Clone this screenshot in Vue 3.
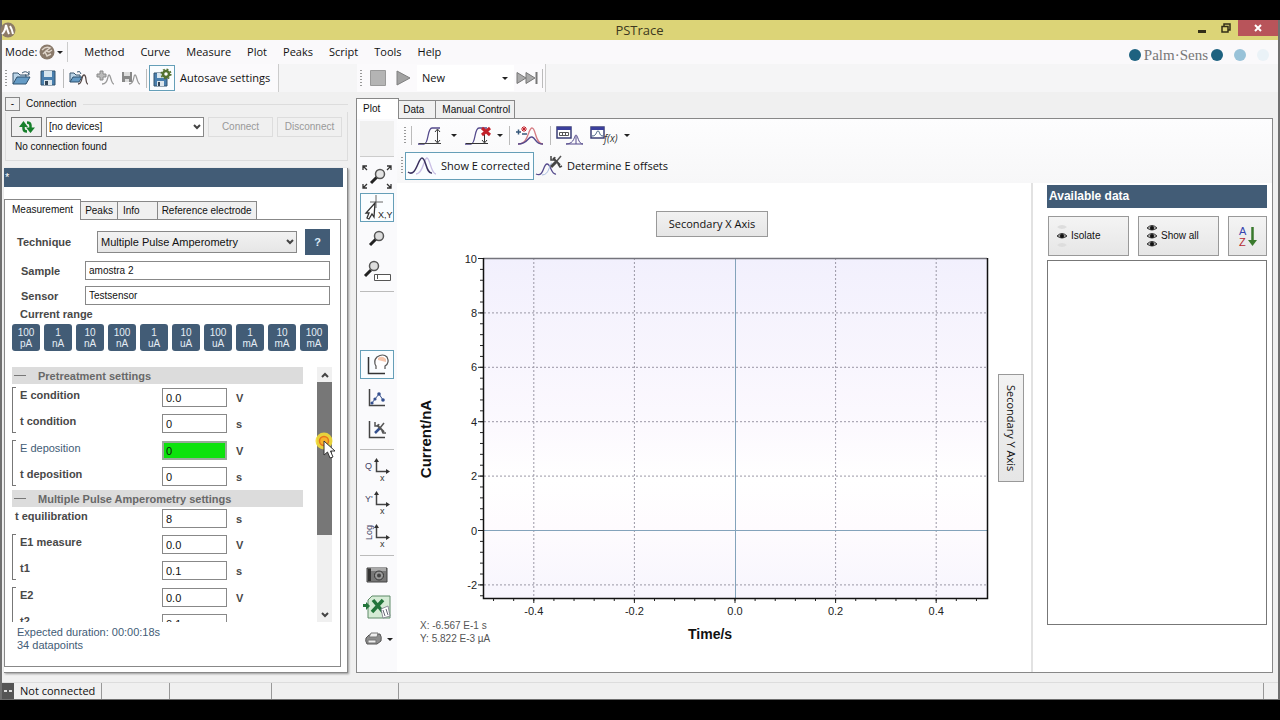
<script setup>
import { ref } from 'vue'

const menus = ['Method', 'Curve', 'Measure', 'Plot', 'Peaks', 'Script', 'Tools', 'Help']
const tabs = ['Measurement', 'Peaks', 'Info', 'Reference electrode']
const plotTabs = ['Plot', 'Data', 'Manual Control']
const ranges = ['100 pA', '1 nA', '10 nA', '100 nA', '1 uA', '10 uA', '100 uA', '1 mA', '10 mA', '100 mA'].map(r => r.split(' '))
const pretreatment = ref([
  [{ id: 'econd', label: 'E condition', value: '0.0', unit: 'V' }, { id: 'tcond', label: 't condition', value: '0', unit: 's' }],
  [{ id: 'edep', label: 'E deposition', value: '0', unit: 'V', active: true }, { id: 'tdep', label: 't deposition', value: '0', unit: 's' }]
])
const pulses = ref([
  [{ id: 'e1', label: 'E1 measure', value: '0.0', unit: 'V' }, { id: 't1', label: 't1', value: '0.1', unit: 's' }],
  [{ id: 'e2', label: 'E2', value: '0.0', unit: 'V' }, { id: 't2', label: 't2', value: '0.1', unit: 's' }]
])
const equilibration = ref('8')
const sample = ref('amostra 2')
const sensor = ref('Testsensor')

const px = v => 335 + v * 503
const py = v => 290.5 - v * 27.2
const xMajor = [-0.4, -0.2, 0, 0.2, 0.4]
const yMajor = [10, 8, 6, 4, 2, 0, -2]
const xMinor = Array.from({ length: 25 }, (_, i) => (i - 12) * 0.04)
const yMinor = Array.from({ length: 32 }, (_, i) => 10 - i * 0.4).filter(v => v > -2.5)
</script>

<template>
  <div class="screen">
    <div class="window">
      <header class="titlebar">
        <svg class="app-icon" width="16" height="16" viewBox="0 0 16 16"><circle cx="6" cy="8" r="7.5" fill="#8d7b66" /><path d="M0 12Q3 10 4 3Q6 10 7 12M8 4Q10 7 11 12" fill="none" stroke="#fff" stroke-width="2" /></svg>
        <h1>PSTrace</h1>
        <div class="winbtns">
          <button aria-label="Minimize"><svg width="8" height="12" viewBox="0 0 8 12"><path d="M0 9.500H8" stroke="#332e18" stroke-width="3" /></svg></button>
          <button aria-label="Restore"><svg width="10" height="10" viewBox="0 0 10 10"><path d="M3 3V1H9V7H7M1 3.500H7V9H1Z" fill="none" stroke="#332e18" stroke-width="1.500" /></svg></button>
          <button class="close" aria-label="Close"><svg width="8" height="8" viewBox="0 0 8 8"><path d="M1 1L7 7M7 1L1 7" stroke="#fff" stroke-width="2" /></svg></button>
        </div>
      </header>

      <nav class="menubar">
        <button class="mode">Mode:
          <svg width="16" height="16" viewBox="0 0 16 16"><circle cx="8" cy="8" r="7.500" fill="#8a7a6b" /><path d="M3 6Q7 2 11 4L7 7L10 8L13 6M4 10L6 8L8 12L12 10" fill="none" stroke="#ded4c9" stroke-width="1.500" /></svg>
          <i class="caret"></i>
        </button>
        <button v-for="m in menus" :key="m">{{ m }}</button>
        <div class="brand">
          <i class="dot"></i><span>Palm·Sens</span><i class="dot"></i><i class="dot mid"></i><i class="dot pale"></i>
        </div>
      </nav>

      <div class="toolbars">
        <div class="tools file-tools">
          <i class="grip"></i>
          <button aria-label="Open"><svg width="20" height="16" viewBox="0 0 20 16"><path d="M1 14V3H6L8 5H14V7" fill="#bcd5e8" stroke="#38566f" /><path d="M1 14L5 7H18L14 14Z" fill="#659bc5" stroke="#2f516e" /><path d="M10 3Q14 0 17 4M17 1V5H13" fill="none" stroke="#38566f" /></svg></button>
          <button aria-label="Save"><svg width="16" height="16" viewBox="0 0 16 16"><path d="M1 1H15V15H1Z" fill="#497fae" stroke="#33526d" /><path d="M4 1H12V7H4Z" fill="#d7e6ef" /><path d="M4 10H12V15H4Z" fill="#dce6ec" /><path d="M5 11H8V15H5Z" fill="#345" /></svg></button>
          <i class="rule"></i>
          <button aria-label="Open curve"><svg width="20" height="16" viewBox="0 0 20 16"><path d="M1 12V3H5L7 5H11V7" fill="#bcd5e8" stroke="#38566f" /><path d="M1 12L4 7H13L10 12Z" fill="#659bc5" stroke="#2f516e" /><path d="M8 2Q11 0 12 4" fill="none" stroke="#38566f" /><path d="M9 14C14 14 12 5 15 5S16 14 19 14" fill="none" stroke="#574a48" stroke-width="1.300" /></svg></button>
          <button aria-label="Add curve"><svg width="20" height="16" viewBox="0 0 20 16"><path d="M5 1H8V4H11V7H8V10H5V7H2V4H5Z" fill="#bbb" stroke="#8a8a8a" /><path d="M7 14C14 14 12 5 14 5S16 14 19 14" fill="none" stroke="#999" stroke-width="1.300" /></svg></button>
          <button aria-label="Save curve"><svg width="20" height="16" viewBox="0 0 20 16"><path d="M1 2H11V12H1Z" fill="#888" /><path d="M3 2H9V6H3ZM4 9H8V12H4Z" fill="#ddd" /><path d="M8 14C14 14 12 5 14 5S16 14 19 14" fill="none" stroke="#999" stroke-width="1.300" /></svg></button>
          <i class="rule"></i>
          <button class="picked" aria-label="Toggle autosave"><svg width="20" height="20" viewBox="0 0 20 20"><path d="M2 5H15V18H2Z" fill="#497fae" stroke="#33526d" /><path d="M5 5H12V10H5Z" fill="#d7e6ef" /><path d="M5 13H12V18H5Z" fill="#dce6ec" /><path d="M6 14H8V18H6Z" fill="#345" /><circle cx="14" cy="6" r="3" fill="#fff" stroke="#53712e" stroke-width="2.500" /><circle cx="14" cy="6" r="4.800" fill="none" stroke="#53712e" stroke-width="1.500" stroke-dasharray="1.900 1.870" /></svg></button>
          <button class="wordy">Autosave settings</button>
        </div>
        <div class="tools run-tools">
          <i class="grip"></i>
          <button aria-label="Stop"><svg width="16" height="16" viewBox="0 0 16 16"><path d="M.5.5H15.500V15.500H.5Z" fill="#b4b4b4" stroke="#999" /></svg></button>
          <button aria-label="Run"><svg width="16" height="16" viewBox="0 0 16 16"><path d="M1 1L14 8L1 15Z" fill="#a2a2a2" stroke="#808080" /></svg></button>
          <button class="new-item">New<i class="caret"></i></button>
          <button aria-label="Skip"><svg width="22" height="14" viewBox="0 0 22 14"><path d="M1 1.500L10 7L1 12.500ZM10 1.500L19 7L10 12.500Z" fill="#aaa" stroke="#777" /><path d="M20.500 1V13" stroke="#777" stroke-width="2" /></svg></button>
          <i class="rule"></i>
        </div>
      </div>

      <main class="body">
        <aside class="left">
          <section class="connection">
            <div class="legend"><button aria-label="Collapse connection">-</button><span>Connection</span><i></i></div>
            <div class="conn-box">
              <div class="conn-row">
                <button class="refresh" aria-label="Refresh devices"><svg width="16" height="14" viewBox="0 0 16 14"><path d="M4.500 6V8.500Q4.500 11.500 8 11.500M11.500 8V5.500Q11.500 2.500 8 2.500" fill="none" stroke="#17802b" stroke-width="2.500" /><path d="M0 7L4.500 1L9 7ZM7 7.500H16L11.500 13Z" fill="#17802b" /></svg></button>
                <div class="drop devices"><select aria-label="Device"><option>[no devices]</option></select><svg width="8" height="6" viewBox="0 0 8 6"><path d="M1 1L4 4L7 1" /></svg></div>
                <button class="conn-btn" disabled>Connect</button>
                <button class="conn-btn" disabled>Disconnect</button>
              </div>
              <p>No connection found</p>
            </div>
          </section>

          <section class="method">
            <div class="banner">*</div>
            <div class="tabs" role="tablist">
              <button v-for="(t, i) in tabs" :key="t" role="tab" :class="{ on: i === 0, wide: t === 'Info' }">{{ t }}</button>
            </div>
            <div class="page">
              <div class="technique">
                <label for="tech">Technique</label>
                <div class="drop"><select id="tech"><option>Multiple Pulse Amperometry</option></select><svg width="8" height="6" viewBox="0 0 8 6"><path d="M1 1L4 4L7 1" /></svg></div>
                <button class="help">?</button>
              </div>
              <div class="field"><label for="sample">Sample</label><input id="sample" v-model="sample"></div>
              <div class="field"><label for="sensor">Sensor</label><input id="sensor" v-model="sensor"></div>
              <h2>Current range</h2>
              <div class="ranges">
                <button v-for="r in ranges" :key="r.join()"><span>{{ r[0] }}</span><span>{{ r[1] }}</span></button>
              </div>
              <div class="scroller">
                <div class="settings">
                  <h3><button aria-label="Collapse"></button>Pretreatment settings</h3>
                  <div v-for="(g, i) in pretreatment" :key="i" class="group">
                    <div v-for="f in g" :key="f.id" class="row" :class="{ active: f.active }">
                      <label :for="f.id">{{ f.label }}</label><input :id="f.id" v-model="f.value"><span>{{ f.unit }}</span>
                    </div>
                  </div>
                  <h3><button aria-label="Collapse"></button>Multiple Pulse Amperometry settings</h3>
                  <div class="row single"><label for="eq">t equilibration</label><input id="eq" v-model="equilibration"><span>s</span></div>
                  <div v-for="(g, i) in pulses" :key="i" class="group">
                    <div v-for="f in g" :key="f.id" class="row">
                      <label :for="f.id">{{ f.label }}</label><input :id="f.id" v-model="f.value"><span>{{ f.unit }}</span>
                    </div>
                  </div>
                </div>
                <div class="scrollbar">
                  <button aria-label="Scroll up"><svg width="8" height="6" viewBox="0 0 8 6"><path d="M1 5L4 2L7 5" /></svg></button>
                  <div class="track"><div class="thumb"></div></div>
                  <button aria-label="Scroll down"><svg width="8" height="6" viewBox="0 0 8 6"><path d="M1 1L4 4L7 1" /></svg></button>
                  <svg class="pointer" width="22" height="30" viewBox="0 0 22 30"><circle cx="9" cy="9" r="8.500" fill="#f3dc35" opacity=".9" /><circle cx="9" cy="9" r="4.500" fill="#f7b32c" stroke="#e8741c" stroke-width="1.500" /><path d="M9 9V23L12.500 20L15 26L18 25L15.500 19H20Z" fill="#fff" stroke="#333" /></svg>
                </div>
              </div>
              <p class="summary">Expected duration: 00:00:18s<br>34 datapoints</p>
            </div>
          </section>
        </aside>

        <section class="right">
          <div class="tabs plot-tabs" role="tablist">
            <button v-for="(t, i) in plotTabs" :key="t" role="tab" :class="{ on: i === 0, data: i === 1 }">{{ t }}</button>
          </div>
          <div class="workspace">
            <div class="rail">
              <div class="rail-top"></div>
              <button aria-label="Zoom to fit"><svg width="30" height="24" viewBox="0 0 30 24"><path d="M1 5V1H5M1 1L5 5M25 1H29V5M29 1L25 5M1 19V23H5M1 23L5 19M25 23H29V19M29 23L25 19" fill="none" stroke="#333" stroke-width="1.300" /><path d="M9 18L15 12" stroke="#222" stroke-width="3" /><circle cx="18" cy="9" r="4.500" fill="#e4e4e4" stroke="#555" stroke-width="1.500" /></svg></button>
              <button class="picked" aria-label="Coordinates"><svg width="30" height="26" viewBox="0 0 30 26"><path d="M14 0V13M8 7H21" stroke="#666" /><path d="M13 8L4 18H7L5 23L7 24L10 19L12 22Z" fill="#fff" stroke="#333" stroke-width="1.300" /><text x="16" y="23" font-size="9" fill="#222">X,Y</text></svg></button>
              <button aria-label="Zoom"><svg width="18" height="18" viewBox="0 0 18 18"><path d="M2 16L8 10" stroke="#222" stroke-width="3" /><circle cx="11" cy="7" r="4.500" fill="#ddd" stroke="#555" stroke-width="1.500" /></svg></button>
              <button class="tall" aria-label="Zoom to value"><svg width="28" height="22" viewBox="0 0 28 22"><path d="M2 16L8 10" stroke="#222" stroke-width="3" /><circle cx="11" cy="6" r="4.500" fill="#ddd" stroke="#555" stroke-width="1.500" /><path d="M11.500 14.500H27.500V20.500H11.500ZM14.500 15V19" fill="#fff" stroke="#555" /></svg></button>
              <i class="hr"></i>
              <div class="spacer"></div>
              <button class="picked preview" aria-label="Peak preview"><svg width="26" height="24" viewBox="0 0 26 24"><path d="M4.500 4V20.500H21" fill="none" stroke="#333" stroke-width="1.500" /><path d="M12 16V13Q9 8 13 4Q19 0 23 4Q26 10 21 13V16" fill="#fff" stroke="#555" stroke-width="1.200" /><path d="M14 5Q18 2 22 6V9L18 8L14 7Z" fill="#f5c5ac" /></svg></button>
              <button aria-label="Curve points"><svg width="18" height="18" viewBox="0 0 18 18"><path d="M1.500 0V16.500H17" fill="none" stroke="#444" stroke-width="1.500" /><path d="M4 14L7 10L11 5L15 11" fill="none" stroke="#35508e" /><circle cx="4" cy="14" r="1.600" fill="#35508e" /><circle cx="7" cy="10" r="1.600" fill="#35508e" /><circle cx="11" cy="5" r="1.800" fill="#35508e" /><circle cx="15" cy="11" r="1.800" fill="#35508e" /></svg></button>
              <button aria-label="Plot settings"><svg width="20" height="18" viewBox="0 0 20 18"><path d="M2.500 0V16.500H18" fill="none" stroke="#444" stroke-width="1.500" /><path d="M8 12L13 7" stroke="#35508e" stroke-width="2.500" /><path d="M13 7L17 2" stroke="#555" stroke-width="1.500" /><path d="M10 4L17 11" stroke="#555" stroke-width="2" /><path d="M8 1V5H11L12 3M19 12L16 12L15 10" fill="none" stroke="#555" stroke-width="1.500" /></svg></button>
              <i class="hr"></i>
              <button v-for="a in ['Q', 'Y\'', 'Log']" :key="a" class="axis" :aria-label="a + ' axis'"><svg width="26" height="26" viewBox="0 0 26 26"><path d="M12.500 4V14.500H24" fill="none" stroke="#444" stroke-width="1.500" /><path d="M10 5L12.500 1L15 5ZM22 12L26 14.500L22 17Z" fill="#333" /><text v-if="a !== 'Log'" x="1" y="12" font-size="9" fill="#446">{{ a }}</text><text v-else x="0" y="0" font-size="9" fill="#446" transform="translate(8 17) rotate(-90)">Log</text><text x="16" y="24" font-size="9" fill="#333">x</text></svg></button>
              <i class="hr"></i>
              <button aria-label="Snapshot"><svg width="22" height="18" viewBox="0 0 22 18"><path d="M1 2H21V16H1Z" fill="#777" stroke="#444" /><path d="M2 3H5V15H2Z" fill="#333" /><path d="M5 2H20V5H5Z" fill="#aaa" /><circle cx="13" cy="9.500" r="4.500" fill="#999" stroke="#333" /><circle cx="13" cy="9.500" r="2" fill="#444" /></svg></button>
              <button aria-label="Export to Excel"><svg width="28" height="24" viewBox="0 0 28 24"><path d="M9 1H27V23H5V5Z" fill="#d5ebd5" stroke="#5f8a68" /><path d="M10 5L20 17M20 5L9 17" stroke="#23753b" stroke-width="3.500" /><path d="M18 14L25 11L27 21L20 23Z" fill="#fff" stroke="#778" stroke-width=".8" /><path d="M20 15L22 21M23 14L25 20" stroke="#667" /><path d="M0 9H3V7L7 11L3 15V12H0Z" fill="#23753b" /></svg></button>
              <button aria-label="Print" class="print"><svg width="18" height="14" viewBox="0 0 18 14"><path d="M1 6L4 3L15 2Q17 5 16 9L12 12L2 12Q0 9 1 6Z" fill="#8c8c8c" stroke="#555" /><path d="M6 1H13L12 5H4ZM3 8H11V11H3Z" fill="#eee" stroke="#777" /></svg><i class="caret"></i></button>
            </div>

            <div class="desk">
              <div class="plot-tools">
                <div class="tools">
                  <i class="grip"></i><i class="rule"></i>
                  <button aria-label="Detect step"><svg width="24" height="20" viewBox="0 0 24 20"><path d="M0 18H6C11 18 9 2 14 2H22" fill="none" stroke="#544a8c" stroke-width="1.300" /><path d="M1 17.500H23M19.500 4V16" stroke="#444" /><path d="M17 6L19.500 3L22 6M17 14L19.500 17L22 14" fill="none" stroke="#333" /></svg><i class="caret"></i></button>
                  <button class="remove" aria-label="Remove step"><svg width="26" height="20" viewBox="0 0 26 20"><path d="M0 18H6C11 18 9 2 14 2H22" fill="none" stroke="#544a8c" stroke-width="1.300" /><path d="M1 17.500H23M19.500 8V16M17 14L19.500 17L22 14" fill="none" stroke="#333" /><path d="M17 2L25 9M25 2L17 9" stroke="#c3212a" stroke-width="3" /></svg><i class="caret"></i></button>
                  <i class="rule"></i>
                  <button class="curve-tool" aria-label="Adjust peaks"><svg width="30" height="20" viewBox="0 0 30 20"><path d="M3 18C14 18 13 2 17 2S20 18 28 18" fill="none" stroke="#d57c83" stroke-width="1.300" /><path d="M3 18C13 18 13 10 17 11S20 18 28 18" fill="none" stroke="#544a8c" stroke-width="1.500" /><path d="M1 6H6M3.500 3.500V8.500M7 8H12" stroke="#37577a" stroke-width="1.500" /><path d="M9 0V6M6 3H12M7 1L11 5M11 1L7 5" stroke="#c3212a" /></svg></button>
                  <i class="rule"></i>
                  <button class="curve-tool" aria-label="Peak table"><svg width="28" height="20" viewBox="0 0 28 20"><path d="M1 1H15V12H1Z" fill="#fff" stroke="#3b3f76" stroke-width="1.500" /><path d="M1 2.500H15" stroke="#3b3f9c" stroke-width="3" /><path d="M3.500 6.500H12.500V9.500H3.500ZM6.500 6V10M9.500 6V10" fill="none" stroke="#555" /><path d="M10 18C19 18 18 9 20 9S22 18 27 18M10 18H27M20 10V18" fill="none" stroke="#544a8c" /></svg></button>
                  <button class="curve-tool" aria-label="Curve function"><svg width="28" height="20" viewBox="0 0 28 20"><path d="M1 1H14V12H1Z" fill="#fff" stroke="#3b3f76" stroke-width="1.500" /><path d="M1 2.500H14" stroke="#3b3f9c" stroke-width="3" /><path d="M2 10C7 10 6 5 8 5S9 10 13 10" fill="none" stroke="#37577a" /><text x="14" y="16" font-size="10" font-style="italic" fill="#333">f(x)</text></svg><i class="caret"></i></button>
                </div>
                <div class="tools second">
                  <i class="grip"></i>
                  <button class="picked labelled"><svg width="30" height="20" viewBox="0 0 30 20"><path d="M9 18C16 18 17 2 20 2S24 18 29 18" fill="none" stroke="#c9bfe5" stroke-width="1.300" /><path d="M1 16C9 22 11 2 15 2S19 18 25 17" fill="none" stroke="#3a315f" stroke-width="1.500" /></svg>Show E corrected</button>
                  <button class="labelled"><svg width="28" height="22" viewBox="0 0 28 22"><path d="M1 19C9 23 8 9 12 9S16 20 21 19" fill="none" stroke="#544a8c" stroke-width="1.300" /><path d="M7 20C15 20 14 8 17 8" fill="none" stroke="#a9bce0" /><path d="M16 12L21 7" stroke="#444" stroke-width="3" /><path d="M21 7L26 1" stroke="#555" stroke-width="1.500" /><path d="M18 3L25 10" stroke="#444" stroke-width="2" /><path d="M16 1V5H19L20 2M27 11L25 12L23 9" fill="none" stroke="#444" stroke-width="1.500" /></svg>Determine E offsets</button>
                </div>
              </div>

              <div class="content">
                <div class="chart">
                  <button class="axis-btn">Secondary X Axis</button>
                  <div class="plot-row">
                    <svg class="plot" viewBox="0 0 592 376">
                      <defs><linearGradient id="wash" x1="0" y1="0" x2="0" y2="1"><stop offset="0" stop-color="#f2f0fd" /><stop offset=".5" stop-color="#fcf9fe" /><stop offset=".65" stop-color="#fff" /><stop offset=".8" stop-color="#fefbfe" /><stop offset="1" stop-color="#f7f5fd" /></linearGradient></defs>
                      <rect x="83" y="18" width="504" height="340" fill="url(#wash)" />
                      <g class="dots">
                        <line v-for="v in xMajor.filter(n => n)" :key="'x' + v" :x1="px(v)" :x2="px(v)" y1="18" y2="358" />
                        <line v-for="v in yMajor.filter(n => n && n < 10)" :key="'y' + v" :y1="py(v)" :y2="py(v)" x1="84" x2="587" />
                      </g>
                      <path d="M335.500 18V358M84 290.500H587" stroke="#84a3bb" />
                      <g stroke="#222">
                        <line v-for="v in xMinor" :key="v" :x1="px(v)" :x2="px(v)" y1="358" y2="361" />
                        <line v-for="v in xMajor" :key="v" :x1="px(v)" :x2="px(v)" y1="358" y2="363" />
                        <line v-for="v in yMinor" :key="v" :y1="py(v)" :y2="py(v)" x1="80" x2="83" />
                        <line v-for="v in yMajor" :key="v" :y1="py(v)" :y2="py(v)" x1="78" x2="83" />
                      </g>
                      <path d="M83 18.500H587" stroke="#74747c" stroke-width="1.500" />
                      <path d="M83.500 18V358.500H587.500V18" fill="none" stroke="#111" stroke-width="1.500" />
                      <g font-size="11" fill="#222">
                        <text v-for="v in xMajor" :key="v" :x="px(v)" y="375" text-anchor="middle">{{ v.toFixed(1) }}</text>
                        <text v-for="v in yMajor" :key="v" :y="py(v) + 4" x="77" text-anchor="end">{{ v }}</text>
                      </g>
                      <text class="ytitle" transform="translate(31 199) rotate(-90)" text-anchor="middle">Current/nA</text>
                    </svg>
                    <button class="axis-btn upright">Secondary Y Axis</button>
                  </div>
                  <div class="readout"><p>X: -6.567 E-1 s<br>Y: 5.822 E-3 µA</p><strong>Time/s</strong></div>
                </div>
                <aside class="data-pane">
                  <h2>Available data</h2>
                  <div class="data-btns">
                    <button><svg width="10" height="24" viewBox="0 0 10 24"><path d="M0 3Q5-1 10 3Q5 7 0 3M0 21Q5 17 10 21Q5 25 0 21" fill="#ddd" /><path d="M0 12Q5 7 10 12Q5 16 0 12" fill="#999" stroke="#333" /><circle cx="5" cy="12" r="2" fill="#111" /></svg>Isolate</button>
                    <button><svg width="10" height="24" viewBox="0 0 10 24"><g v-for="y in [0, 8, 16]" :key="y" :transform="`translate(0 ${y})`"><path d="M0 4Q5-1 10 4Q5 8 0 4" fill="#aaa" stroke="#333" /><circle cx="5" cy="4" r="2" fill="#111" /></g></svg>Show all</button>
                    <button class="sort" aria-label="Sort A to Z"><svg width="18" height="22" viewBox="0 0 18 22"><text x="0" y="10" font-size="11" fill="#3744ae">A</text><text x="0" y="21" font-size="11" fill="#b62932">Z</text><path d="M13.500 2V17" stroke="#39792c" stroke-width="2.500" /><path d="M9 15H18L13.500 21Z" fill="#39792c" /></svg></button>
                  </div>
                  <div class="list"></div>
                </aside>
              </div>
            </div>
          </div>
        </section>
      </main>

      <footer class="status">
        <i class="plug"></i><span>Not connected</span><span></span><span></span><span></span><span class="last"></span>
      </footer>
    </div>
  </div>
</template>

<style>
html, body { margin: 0; background: #000; }
</style>

<style scoped>
* { box-sizing: border-box; }
p, h1, h2, h3 { margin: 0; font-weight: normal; }
svg { display: block; flex: none; overflow: visible; }
button, input, select { margin: 0; padding: 0; border: 0; border-radius: 0; background: none; font: inherit; color: inherit; }
button { display: flex; align-items: center; justify-content: center; white-space: nowrap; }
.screen { min-height: 100vh; display: flex; flex-direction: column; padding: 20px 0; background: #000; font: 10px/14px "Liberation Sans", Arial, sans-serif; color: #111; }
.window { flex: 1; display: flex; flex-direction: column; background: #f0f0f0; border: solid #707070; border-width: 0 2px 1px; }
.titlebar { height: 20px; display: flex; align-items: center; background: #dcd477; font: 12px/18px "Open Sans", sans-serif; color: #3d3920; }
.app-icon { width: 16px; margin-right: 71px; }
.titlebar h1 { flex: 1; text-align: center; font-size: 13px; }
.winbtns { display: flex; align-self: flex-start; }
.winbtns button { width: 24px; height: 16px; }
.winbtns .close { width: 40px; background: #b8545a; }
.menubar { height: 24px; display: flex; align-items: center; gap: 16px; padding-left: 3px; background: #faf9fb; font: 11px/16px "Open Sans", sans-serif; color: #111; }
.mode { gap: 2px; padding-right: 4px; height: 20px; border-right: 1px solid #ccc; }
.caret { border: 3px solid transparent; border-top-color: #222; border-bottom: 0; }
.brand { display: flex; align-items: center; gap: 3px; margin-left: auto; padding: 6px 9px 0 0; font: 15px/16px "Liberation Serif", serif; color: #777; }
.dot { width: 12px; height: 12px; border-radius: 50%; background: #1d6280; }
.mid { margin-left: 8px; background: #98c2d8; }
.pale { margin-left: 8px; background: #eaf2f7; }
.toolbars { height: 28px; display: flex; gap: 78px; background: #f5f5f6; font: 11px/16px "Open Sans", sans-serif; color: #111; }
.tools { display: flex; align-items: center; }
.file-tools, .run-tools { background: #fbfafc; border-right: 1px solid #ccc; }
.file-tools { width: 277px; }
.file-tools > button, .run-tools > button { width: 26px; height: 26px; flex: none; }
.file-tools .grip { margin-right: 2px; }
.file-tools > .wordy { width: auto; padding-left: 5px; }
.run-tools { width: 189px; }
.run-tools .new-item { width: 97px; padding: 0 6px 0 5px; justify-content: space-between; background: #fff; }
.grip { width: 2px; height: 17px; margin: 0 3px; background: repeating-linear-gradient(#999 0 1px, transparent 1px 3px); flex: none; }
.rule { width: 1px; height: 19px; margin: 0 2px; background: #bbb; flex: none; }
.picked { border: 1px solid #659fb8; background: #fafdff; }
.body { flex: 1; min-height: 0; display: flex; gap: 8px; padding: 4px 5px 9px 2px; }
.left { width: 344px; flex: none; display: flex; flex-direction: column; gap: 7px; }
.connection { margin-left: 1px; }
.legend { display: flex; align-items: center; gap: 6px; height: 16px; }
.legend button { width: 15px; height: 14px; border: 1px solid #888; }
.legend i { flex: 1; height: 1px; background: #ddd; }
.conn-box { padding: 5px; border: 1px solid #ddd; border-top: 0; height: 49px; }
.conn-row { display: flex; gap: 4px; height: 20px; align-items: stretch; }
.refresh { width: 31px; border: 1px solid #777; }
.drop { position: relative; display: flex; }
.drop select { appearance: none; width: 100%; padding-left: 3px; border: 1px solid #888; background: linear-gradient(#f2f2f2, #e6e6e6); }
.drop svg { position: absolute; right: 3px; top: 50%; margin-top: -3px; pointer-events: none; }
.drop path, .scrollbar button path { fill: none; stroke: #444; stroke-width: 2; }
.devices { flex: 1; }
.devices select { padding-left: 2px; background: #fff; }
.conn-btn { width: 65px; border: 1px solid #ddd; color: #999; }
.conn-box p { padding: 3px 4px; }
.method { flex: 1; display: flex; flex-direction: column; padding-right: 4px; padding-bottom: 5px; background: #fff; border-right: 1px solid #888; border-bottom: 1px solid #888; box-shadow: 1px 1px 2px #999; }
.banner { height: 19px; padding: 2px 1px; background: #425c76; color: #fff; margin-bottom: 12px; font-size: 11px; }
.tabs { display: flex; align-items: flex-end; height: 20px; }
.tabs button { height: 18px; padding: 0 4px; border: 1px solid #888; border-left: 0; border-bottom: 0; background: #f0f0f0; }
.tabs .on { height: 21px; padding: 0 7px; border-left: 1px solid #888; background: #fff; margin-bottom: -1px; position: relative; }
.tabs .wide { padding: 0 17px 0 5px; }
.page { flex: 1; margin-right: 2px; border: 1px solid #888; padding: 9px 8px 0 7px; font-size: 11px; font-weight: bold; color: #484848; display: flex; flex-direction: column; }
.page input, .page select { font-weight: normal; color: #111; }
.page input { height: 19px; padding: 0 3px; border: 1px solid #888; background: #fff; min-width: 0; }
.technique { display: flex; align-items: center; padding-left: 5px; padding-right: 2px; }
.technique label { width: 80px; }
.technique .drop { flex: 1; height: 22px; }
.help { width: 25px; height: 26px; margin-left: 8px; background: #425c76; color: #dceaf8; }
.field { display: flex; align-items: center; padding: 0 2px 0 9px; margin-top: 6px; }
.field label { width: 64px; }
.field input { flex: 1; font-size: 10px; }
.page h2 { margin: 2px 0 3px 8px; font: inherit; }
.ranges { display: flex; gap: 4px; font: 10px/11px "Liberation Sans", sans-serif; }
.ranges button { width: 28px; height: 27px; flex-direction: column; border-radius: 3px; background: #425c76; color: #e4edf5; }
.scroller { margin-top: 16px; height: 255px; display: flex; justify-content: space-between; }
.settings { width: 291px; overflow: hidden; }
.settings h3 { display: flex; align-items: center; height: 17px; background: #dcdcdc; font: inherit; color: #686868; }
.settings h3 button { width: 12px; height: 1px; margin: 0 12px 0 2px; background: #777; }
.group { position: relative; margin-bottom: 1px; padding-left: 8px; }
.group::before { content: ""; position: absolute; left: 0; top: 3px; bottom: 3px; width: 3px; border: 1px solid #777; border-right: 0; }
.row { height: 26px; display: flex; align-items: flex-start; }
.row label { width: 142px; padding-top: 4px; }
.row input { width: 65px; margin: 4px 9px 0 0; }
.row span { padding-top: 7px; }
.row.active label { font-weight: normal; color: #425c76; }
.row.active input { background: #0ce30c; border: 2px solid #9a9; padding: 0 2px; }
.row.single { height: 24px; padding-left: 3px; }
.row.single label { width: 147px; padding-top: 2px; }
.row.single input { margin-top: 2px; }
.row.single span { padding-top: 5px; }
.scrollbar { position: relative; width: 15px; display: flex; flex-direction: column; background: #f0f0f0; }
.scrollbar button { height: 15px; width: 100%; }
.track { flex: 1; }
.thumb { height: 68%; background: #777; }
.pointer { position: absolute; left: -2px; top: 65px; }
.summary { padding: 4px 5px; line-height: 13px; color: #425c76; }
.summary { font-weight: normal; }
.right { flex: 1; min-width: 0; display: flex; flex-direction: column; }
.plot-tabs { margin-top: 2px; }
.plot-tabs button { padding: 0 4px 0 6px; }
.plot-tabs .on { padding: 0 18px 0 6px; }
.plot-tabs .data { padding: 0 11px 0 4px; }
.workspace { flex: 1; display: flex; border: 1px solid #888; background: #fff; }
.rail { width: 40px; padding: 2px 3px; display: flex; flex-direction: column; background: #fafafc; }
.rail-top { height: 36px; background: #f0f0f0; border-bottom: 1px solid #ccc; margin-bottom: 4px; }
.rail button { height: 32px; }
.rail .picked { height: 29px; }
.rail .preview { margin-bottom: 3px; }
.rail .tall { height: 34px; }
.hr { height: 1px; background: #bbb; margin: 3px 0; }
.spacer { height: 55px; }
.rail .axis { height: 33px; }
.print { gap: 4px; padding-left: 4px; }
.desk { flex: 1; min-width: 0; display: flex; flex-direction: column; }
.plot-tools { height: 64px; padding: 2px 4px; background: linear-gradient(#fdfdfe, #f7f7f8); font: 11px/16px "Open Sans", sans-serif; }
.plot-tools .tools { height: 29px; }
.plot-tools .tools button { gap: 9px; padding: 0 4px; }
.plot-tools .tools .remove { gap: 6px; }
.plot-tools .tools .curve-tool { gap: 6px; padding: 0 3px; }
.plot-tools .second { height: 31px; }
.plot-tools .second .grip { margin: 0 2px 0 0; }
.plot-tools .second .labelled { height: 28px; gap: 4px; padding: 0 3px 0 1px; }
.content { flex: 1; display: flex; }
.chart { flex: 1; min-width: 0; display: flex; flex-direction: column; align-items: center; padding: 28px 7px 0 3px; border-right: 2px solid #e2e2e2; }
.axis-btn { height: 26px; padding: 0 12px; border: 1px solid #999; background: linear-gradient(#f2f2f2, #e6e6e6); font: 11px/16px "Open Sans", sans-serif; }
.plot-row { width: 100%; display: flex; align-items: center; gap: 6px; margin-top: 3px; }
.plot { flex: 1; min-width: 0; }
.upright { writing-mode: vertical-rl; width: 26px; height: auto; padding: 10px 0; }
.dots line { stroke: #9a97a5; stroke-dasharray: 2 2; }
.ytitle { font-size: 15px; font-weight: bold; fill: #111; }
.readout { width: 100%; display: grid; grid-template-columns: 268px auto; align-items: center; padding: 3px 0 0 20px; line-height: 13px; color: #555; }
.readout strong { font-size: 14px; color: #111; padding-top: 4px; }
.data-pane { width: 239px; flex: none; padding: 2px 5px 47px 14px; display: flex; flex-direction: column; gap: 8px; }
.data-pane h2 { height: 23px; padding: 0 2px; background: #425c76; color: #fff; font: bold 12px/23px "Liberation Sans", sans-serif; }
.data-btns { display: grid; grid-template-columns: 81px 81px 39px; justify-content: space-between; height: 40px; padding-left: 1px; }
.data-btns button { justify-content: flex-start; gap: 4px; padding-left: 8px; border: 1px solid #999; background: linear-gradient(#f4f4f4, #e6e6e6); }
.data-btns .sort { justify-content: center; padding: 0; }
.list { flex: 1; border: 1px solid #777; margin-top: -4px; }
.status { height: 17px; display: flex; align-items: stretch; border-top: 1px solid #ddd; font: 11px/16px "Open Sans", sans-serif; }
.plug { width: 12px; border: solid #555; border-width: 7px 2px; background: repeating-linear-gradient(90deg, #ddd 0 3px, #555 3px 5px) padding-box; }
.status span { border-right: 1px solid #999; width: 68px; }
.status span:nth-child(2) { width: 88px; padding-left: 6px; }
.status span:nth-child(4) { width: 102px; }
.status span:nth-child(5) { width: 127px; }
.status .last { flex: 1; margin-right: 14px; }
</style>
